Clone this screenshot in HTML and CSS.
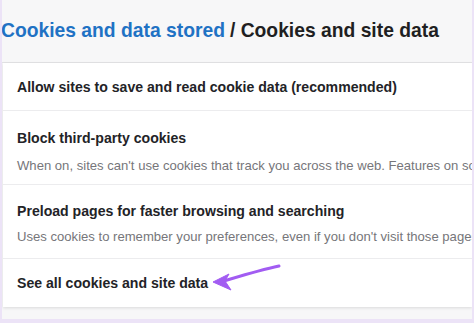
FILE: index.html
```html
<!DOCTYPE html>
<html lang="en">
<head>
  <meta charset="UTF-8" />
  <title>Cookies and site data</title>
  <link rel="stylesheet" href="styles.css">
</head>
<body>
  <div class="frame">
    <div class="crumbs">
      <span class="crumb-link">Cookies and data stored</span>
      <span class="crumb-current">/ Cookies and site data</span>
    </div>

    <div class="card">
      <div class="row first">
        <div class="row-title">Allow sites to save and read cookie data (recommended)</div>
      </div>
      <div class="row">
        <div class="row-title">Block third-party cookies</div>
        <div class="row-desc">When on, sites can't use cookies that track you across the web. Features on some sites may break.</div>
      </div>
      <div class="row third">
        <div class="row-title">Preload pages for faster browsing and searching</div>
        <div class="row-desc">Uses cookies to remember your preferences, even if you don't visit those pages.</div>
      </div>
      <div class="row last">
        <div class="row-title">See all cookies and site data</div>
        <svg class="pointer" width="70" height="28" viewBox="0 0 70 28">
          <path d="M67 2 C48 6 32 11 12 17" stroke="#a25cf2" stroke-width="3" fill="none" stroke-linecap="round"/>
          <path d="M1 18 L17 10 L13 17 L19 26 Z" fill="#a25cf2" stroke="#a25cf2" stroke-width="1" stroke-linejoin="round"/>
        </svg>
      </div>
    </div>
  </div>
</body>
</html>
```

FILE: styles.css
```css
html, body {
  margin: 0;
  padding: 0;
}
body {
  font-family: "Liberation Sans", Arial, sans-serif;
  background: #ece3f7;
  width: 474px;
  height: 323px;
  overflow: hidden;
}
.frame {
  margin: 0 2px;
  height: 319px;
  background: #f7f7f8;
  overflow: hidden;
}
.crumbs {
  height: 62px;
  border-bottom: 1px solid #e4e4e6;
  display: flex;
  align-items: center;
  gap: 5px;
  font-size: 19.3px;
  font-weight: 600;
  white-space: nowrap;
}
.crumb-link {
  color: #1f72c4;
  margin-left: -1px;
}
.crumb-current {
  color: #1f1f22;
}
.card {
  margin-left: 1px;
  background: #fff;
  box-shadow: 0 1px 3px rgba(0,0,0,0.12);
}
.row {
  box-sizing: border-box;
  padding: 19px 0 0 14px;
  border-bottom: 1px solid #ececee;
  height: 74px;
  display: flex;
  flex-direction: column;
  gap: 12px;
  white-space: nowrap;
  overflow: hidden;
}
.row.first {
  height: 48px;
  padding-top: 0;
  justify-content: center;
}
.row.third {
  padding-top: 18px;
  gap: 10px;
}
.row.last {
  height: 48px;
  padding-top: 0;
  border-bottom: none;
  flex-direction: row;
  align-items: center;
  gap: 4px;
}
.row-title {
  font-size: 14.1px;
  font-weight: 700;
  color: #232327;
}
.row-desc {
  font-size: 13.1px;
  color: #76767a;
}
.pointer {
  margin-top: -10px;
}
```
